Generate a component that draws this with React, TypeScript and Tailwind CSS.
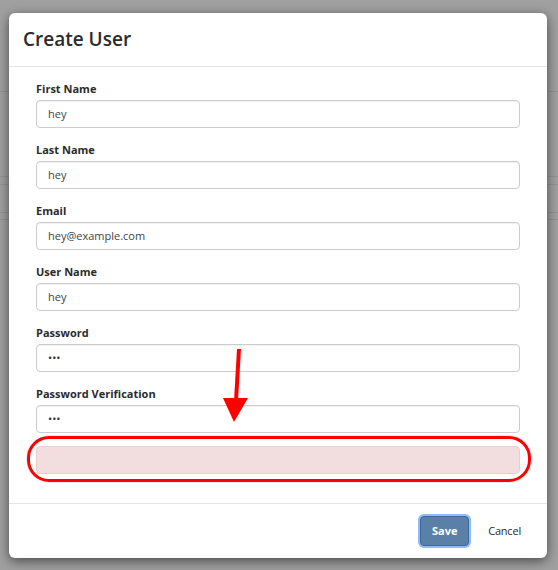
import React from 'react';

const fields = [
  { id: 'firstName', label: 'First Name', value: 'hey' },
  { id: 'lastName', label: 'Last Name', value: 'hey' },
  { id: 'email', label: 'Email', value: 'hey@example.com' },
  { id: 'userName', label: 'User Name', value: 'hey' },
  { id: 'password', label: 'Password', value: '•••', secret: true },
  { id: 'passwordVerify', label: 'Password Verification', value: '•••', secret: true },
];

const App: React.FC = () => {
  return (
    <div className="relative h-[570px] w-full overflow-hidden bg-[#a0a0a0] font-['Open_Sans',sans-serif]">
      {/* page behind the backdrop */}
      <div className="flex flex-col">
        <div className="h-[92px] border-b border-[#939393]" />
        <div className="h-[85px] border-b border-[#939393]" />
        <div className="h-[8px] border-b border-[#939393]" />
        <div className="h-[28px] border-b border-[#939393]" />
        <div className="h-[7px] border-b border-[#939393]" />
      </div>

      {/* modal */}
      <div className="absolute left-[9px] top-[13px] flex h-[545px] w-[538px] flex-col rounded-[6px] bg-white shadow-[0_3px_12px_rgba(0,0,0,0.55)]">
        <div className="flex h-[54px] items-center border-b border-[#e5e5e5] px-[14px]">
          <h1 className="text-[19px] font-semibold leading-none text-[#2b2b2b]">Create User</h1>
        </div>

        <div className="relative flex flex-1 flex-col px-[27px] pt-[13px]">
          {fields.map((f) => (
            <div key={f.id} className="mb-[13px] flex flex-col">
              <label className="mb-[3px] text-[11px] font-bold leading-[17px] text-[#2b2b2b]">{f.label}</label>
              <div className="flex h-[28px] items-center rounded-[4px] border border-[#cccccc] px-[11px] shadow-[inset_0_1px_1px_rgba(0,0,0,0.06)]">
                <span className={f.secret ? 'text-[11px] text-[#333]' : 'text-[11px] text-[#444]'}>
                  {f.value}
                </span>
              </div>
            </div>
          ))}

          <div className="relative">
            <div className="h-[28px] rounded-[4px] border border-[#ebccd1] bg-[#f2dede]" />
            {/* annotation ring */}
            <div className="absolute -left-[9px] -right-[11px] -top-[10px] -bottom-[8px] rounded-[22px] border-[3px] border-[#ff0000] shadow-[0_0_2px_rgba(0,0,0,0.25)]" />
          </div>

          {/* annotation arrow */}
          <svg
            className="absolute left-[214px] top-[278px]"
            width="30"
            height="80"
            viewBox="0 0 30 80"
          >
            <line x1="16" y1="4" x2="13" y2="56" stroke="#ff0000" strokeWidth="4" />
            <polygon points="0,53 25,53 11,77" fill="#ff0000" />
          </svg>
        </div>

        <div className="flex h-[55px] items-center justify-end gap-[19px] border-t border-[#e5e5e5] pr-[26px]">
          <button className="h-[30px] w-[49px] rounded-[4px] border border-[#3d6a9b] bg-[#5b80a8] text-[11px] font-bold text-white shadow-[0_0_0_2px_#8fbcf5]">
            Save
          </button>
          <button className="text-[11px] tracking-[-0.2px] text-[#2b2b2b]">Cancel</button>
        </div>
      </div>
    </div>
  );
};

export default App;
